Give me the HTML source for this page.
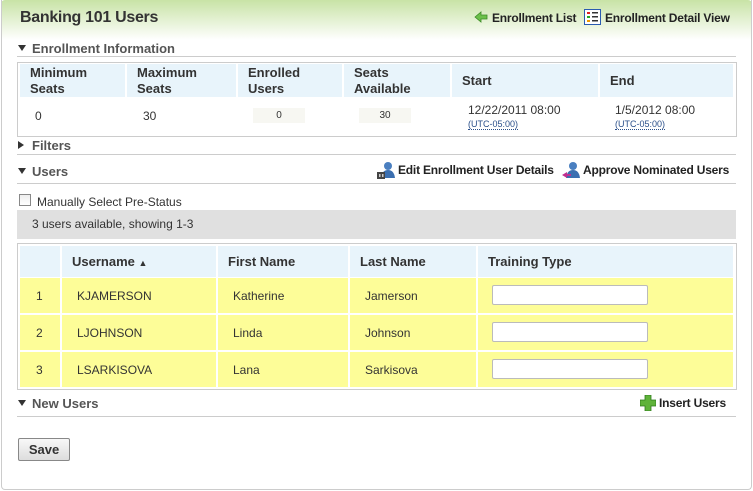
<!DOCTYPE html>
<html><head><style>
*{box-sizing:border-box;margin:0;padding:0}
body{width:753px;height:491px;background:#fff;font-family:"Liberation Sans",Arial,sans-serif;font-size:12px;color:#333;position:relative;overflow:hidden}
.frame{position:absolute;left:1px;top:0;width:751px;height:490px;border:1px solid #ccc;border-top:none;border-radius:0 0 4px 4px}
.hdr{position:absolute;left:1px;top:0;width:751px;height:40px;background:linear-gradient(#c8e3a6,#fff);border-radius:4px 4px 0 0}
.abs{position:absolute;white-space:nowrap}
.title{left:20px;top:9px;font-size:16px;font-weight:bold;color:#333;letter-spacing:-0.3px}
.lnk{font-size:12px;color:#222;font-weight:bold;letter-spacing:-0.2px}
.sec{font-size:13px;font-weight:bold;color:#555;left:18px}
.tri{display:inline-block;width:0;height:0;border-left:4px solid transparent;border-right:4px solid transparent;border-top:6px solid #333;margin-right:6px;vertical-align:2px}
.trir{display:inline-block;width:0;height:0;border-top:4px solid transparent;border-bottom:4px solid transparent;border-left:6px solid #333;margin-right:8px;vertical-align:1px}
.line{position:absolute;left:17px;width:719px;height:1px;background:#ccc}
.cell{position:absolute;background:#e8f4fb;font-weight:bold;font-size:13px;color:#333;padding-left:10px;line-height:16px}
.yc{position:absolute;background:#fdfd98;font-size:12px;color:#333}
.inp{position:absolute;width:156px;height:20px;background:#fff;border:1px solid #bbb;border-radius:2px}
</style></head><body>
<div class="hdr"></div>
<div class="frame"></div>
<div class="abs title">Banking 101 Users</div>
<svg class="abs" style="left:474px;top:11px" width="14" height="12" viewBox="0 0 14 12"><path d="M1 6 L7 1 V4 H13 V8 H7 V11 Z" fill="#6cc04a" stroke="#3a8a25" stroke-width="0.8"/></svg>
<div class="abs lnk" style="left:492px;top:11px">Enrollment List</div>
<svg class="abs" style="left:584px;top:9px" width="17" height="16" viewBox="0 0 17 16"><rect x="0.5" y="0.5" width="16" height="15" fill="#fff" stroke="#2a5bb0"/><rect x="3" y="3" width="3" height="2" fill="#d22"/><rect x="3" y="7" width="3" height="2" fill="#2a2"/><rect x="3" y="11" width="3" height="2" fill="#e90"/><rect x="8" y="3" width="6" height="1.5" fill="#333"/><rect x="8" y="7" width="6" height="1.5" fill="#333"/><rect x="8" y="11" width="6" height="1.5" fill="#333"/></svg>
<div class="abs lnk" style="left:605px;top:11px">Enrollment Detail View</div>

<div class="abs sec" style="top:41px"><span class="tri"></span>Enrollment Information</div>
<div class="line" style="top:56px"></div>
<div style="position:absolute;left:17px;top:62px;width:720px;height:75px;border:1px solid #ccc"></div>
<div class="cell" style="left:20px;top:64px;width:105px;height:33px;padding-top:1px">Minimum<br>Seats</div>
<div class="cell" style="left:127px;top:64px;width:109px;height:33px;padding-top:1px">Maximum<br>Seats</div>
<div class="cell" style="left:238px;top:64px;width:104px;height:33px;padding-top:1px">Enrolled<br>Users</div>
<div class="cell" style="left:344px;top:64px;width:106px;height:33px;padding-top:1px">Seats<br>Available</div>
<div class="cell" style="left:452px;top:64px;width:146px;height:33px;padding-top:9px">Start</div>
<div class="cell" style="left:600px;top:64px;width:133px;height:33px;padding-top:9px">End</div>
<div class="abs" style="left:35px;top:109px">0</div>
<div class="abs" style="left:143px;top:109px">30</div>
<div class="abs" style="left:253px;top:108px;width:52px;height:15px;background:#f7f7f2;font-size:10px;text-align:center;line-height:15px">0</div>
<div class="abs" style="left:359px;top:108px;width:52px;height:15px;background:#f7f7f2;font-size:10px;text-align:center;line-height:15px">30</div>
<div class="abs" style="left:468px;top:103px">12/22/2011 08:00</div>
<div class="abs" style="left:468px;top:119px;font-size:9px;color:#2a4f8a;border-bottom:1px dotted #2a4f8a">(UTC-05:00)</div>
<div class="abs" style="left:615px;top:103px">1/5/2012 08:00</div>
<div class="abs" style="left:615px;top:119px;font-size:9px;color:#2a4f8a;border-bottom:1px dotted #2a4f8a">(UTC-05:00)</div>

<div class="abs sec" style="top:138px"><span class="trir"></span>Filters</div>
<div class="line" style="top:154px"></div>
<div class="abs sec" style="top:164px"><span class="tri"></span>Users</div>
<svg class="abs" style="left:376px;top:161px" width="20" height="18" viewBox="0 0 20 18"><circle cx="12" cy="5" r="4" fill="#4a7fc0"/><path d="M5 17 Q6 9 12 9 Q18 9 19 17Z" fill="#3b6fb0"/><rect x="1" y="11" width="8" height="7" fill="#444"/><rect x="3" y="13" width="1.5" height="3" fill="#ccc"/><rect x="6" y="13" width="1.5" height="3" fill="#ccc"/></svg>
<div class="abs lnk" style="left:398px;top:163px">Edit Enrollment User Details</div>
<svg class="abs" style="left:561px;top:161px" width="20" height="18" viewBox="0 0 20 18"><circle cx="12" cy="5" r="4" fill="#4a7fc0"/><path d="M5 17 Q6 9 12 9 Q18 9 19 17Z" fill="#3b6fb0"/><path d="M1 14 L6 11 V13 H10 V15 H6 V17Z" fill="#c03090"/></svg>
<div class="abs lnk" style="left:583px;top:163px">Approve Nominated Users</div>
<div class="line" style="top:183px"></div>

<div class="abs" style="left:19px;top:194px;width:12px;height:12px;border:1px solid #888;background:linear-gradient(#eee,#fff)"></div>
<div class="abs" style="left:37px;top:195px">Manually Select Pre-Status</div>
<div class="abs" style="left:17px;top:210px;width:719px;height:29px;background:#e0e0e0;padding:7px 0 0 15px">3 users available, showing 1-3</div>

<div style="position:absolute;left:17px;top:243px;width:720px;height:147px;border:1px solid #ccc"></div>
<div class="cell" style="left:20px;top:246px;width:40px;height:31px"></div>
<div class="cell" style="left:62px;top:246px;width:154px;height:31px;padding-top:8px">Username <span style="font-size:9px">&#9650;</span></div>
<div class="cell" style="left:218px;top:246px;width:130px;height:31px;padding-top:8px">First Name</div>
<div class="cell" style="left:350px;top:246px;width:126px;height:31px;padding-top:8px">Last Name</div>
<div class="cell" style="left:478px;top:246px;width:255px;height:31px;padding-top:8px">Training Type</div>

<div class="yc" style="left:20px;top:278px;width:40px;height:35px"></div><div class="abs" style="left:36px;top:289px">1</div>
<div class="yc" style="left:62px;top:278px;width:154px;height:35px"></div><div class="abs" style="left:77px;top:289px">KJAMERSON</div>
<div class="yc" style="left:218px;top:278px;width:130px;height:35px"></div><div class="abs" style="left:233px;top:289px">Katherine</div>
<div class="yc" style="left:350px;top:278px;width:126px;height:35px"></div><div class="abs" style="left:365px;top:289px">Jamerson</div>
<div class="yc" style="left:478px;top:278px;width:255px;height:35px"></div><div class="inp" style="left:492px;top:285px"></div>

<div class="yc" style="left:20px;top:315px;width:40px;height:35px"></div><div class="abs" style="left:36px;top:326px">2</div>
<div class="yc" style="left:62px;top:315px;width:154px;height:35px"></div><div class="abs" style="left:77px;top:326px">LJOHNSON</div>
<div class="yc" style="left:218px;top:315px;width:130px;height:35px"></div><div class="abs" style="left:233px;top:326px">Linda</div>
<div class="yc" style="left:350px;top:315px;width:126px;height:35px"></div><div class="abs" style="left:365px;top:326px">Johnson</div>
<div class="yc" style="left:478px;top:315px;width:255px;height:35px"></div><div class="inp" style="left:492px;top:322px"></div>

<div class="yc" style="left:20px;top:352px;width:40px;height:35px"></div><div class="abs" style="left:36px;top:363px">3</div>
<div class="yc" style="left:62px;top:352px;width:154px;height:35px"></div><div class="abs" style="left:77px;top:363px">LSARKISOVA</div>
<div class="yc" style="left:218px;top:352px;width:130px;height:35px"></div><div class="abs" style="left:233px;top:363px">Lana</div>
<div class="yc" style="left:350px;top:352px;width:126px;height:35px"></div><div class="abs" style="left:365px;top:363px">Sarkisova</div>
<div class="yc" style="left:478px;top:352px;width:255px;height:35px"></div><div class="inp" style="left:492px;top:359px"></div>

<div class="abs sec" style="top:396px"><span class="tri"></span>New Users</div>
<svg class="abs" style="left:640px;top:395px" width="16" height="16" viewBox="0 0 16 16"><path d="M5 0H11V5H16V11H11V16H5V11H0V5H5Z" fill="#5fb33a" stroke="#2f7a1c" stroke-width="0.8"/></svg>
<div class="abs lnk" style="left:659px;top:396px">Insert Users</div>
<div class="line" style="top:416px"></div>

<div class="abs" style="left:18px;top:438px;width:52px;height:23px;border:1px solid #888;border-radius:2px;background:linear-gradient(#f8f8f8,#ddd);font-weight:bold;font-size:13px;text-align:center;line-height:21px;color:#333">Save</div>
</body></html>
